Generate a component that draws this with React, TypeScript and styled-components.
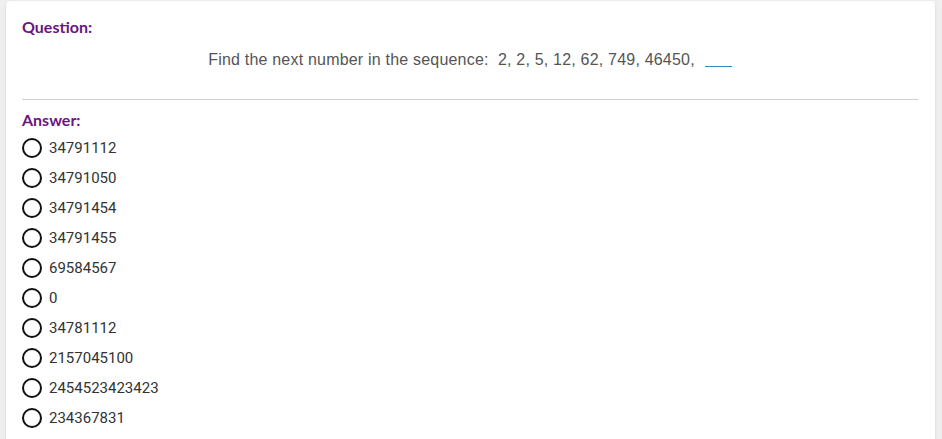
import React from 'react';
import styled, { createGlobalStyle } from 'styled-components';

const GlobalStyle = createGlobalStyle`
  html, body {
    margin: 0;
    padding: 0;
    background: #efefef;
  }
`;

const Page = styled.div`
  padding: 1px 7px 0 6px;
  height: 439px;
  box-sizing: border-box;
  overflow: hidden;
`;

const Card = styled.div`
  background: #fff;
  border-radius: 4px;
  box-shadow: 0 1px 3px rgba(0, 0, 0, 0.12);
  padding: 15px 17px 20px 16px;
  min-height: 460px;
  box-sizing: border-box;
`;

const Label = styled.div`
  font-family: Lato, 'Open Sans', sans-serif;
  font-weight: 700;
  font-size: 16px;
  line-height: 22px;
  color: #6b1580;
`;

const QuestionText = styled.div`
  font-family: 'Liberation Sans', Arial, sans-serif;
  font-size: 16px;
  line-height: 20px;
  letter-spacing: 0.2px;
  color: #555;
  text-align: center;
  margin: 12px 0 0;
  padding-bottom: 29px;
  border-bottom: 1px solid #cfcfcf;
`;

const Blank = styled.span`
  display: inline-block;
  width: 27px;
  margin-left: 10px;
  border-bottom: 1px solid #2a8fbf;
  vertical-align: -2px;
`;

const AnswerLabel = styled(Label)`
  margin-top: 9px;
`;

const Options = styled.div`
  display: flex;
  flex-direction: column;
  margin-top: 2px;
`;

const Option = styled.label`
  display: flex;
  align-items: center;
  gap: 7px;
  height: 30px;
  font-family: Roboto, 'Noto Sans', sans-serif;
  font-size: 15px;
  color: #333;
`;

const Radio = styled.span`
  width: 20px;
  height: 20px;
  box-sizing: border-box;
  border: 2px solid #111;
  border-radius: 50%;
  flex-shrink: 0;
`;

const options = [
  '34791112',
  '34791050',
  '34791454',
  '34791455',
  '69584567',
  '0',
  '34781112',
  '2157045100',
  '2454523423423',
  '234367831',
];

export default function App() {
  return (
    <Page>
      <GlobalStyle />
      <Card>
        <Label>Question:</Label>
        <QuestionText>
          Find the next number in the sequence:&nbsp; 2, 2, 5, 12, 62, 749, 46450,
          <Blank />
        </QuestionText>
        <AnswerLabel>Answer:</AnswerLabel>
        <Options>
          {options.map((o) => (
            <Option key={o}>
              <Radio />
              {o}
            </Option>
          ))}
        </Options>
      </Card>
    </Page>
  );
}
